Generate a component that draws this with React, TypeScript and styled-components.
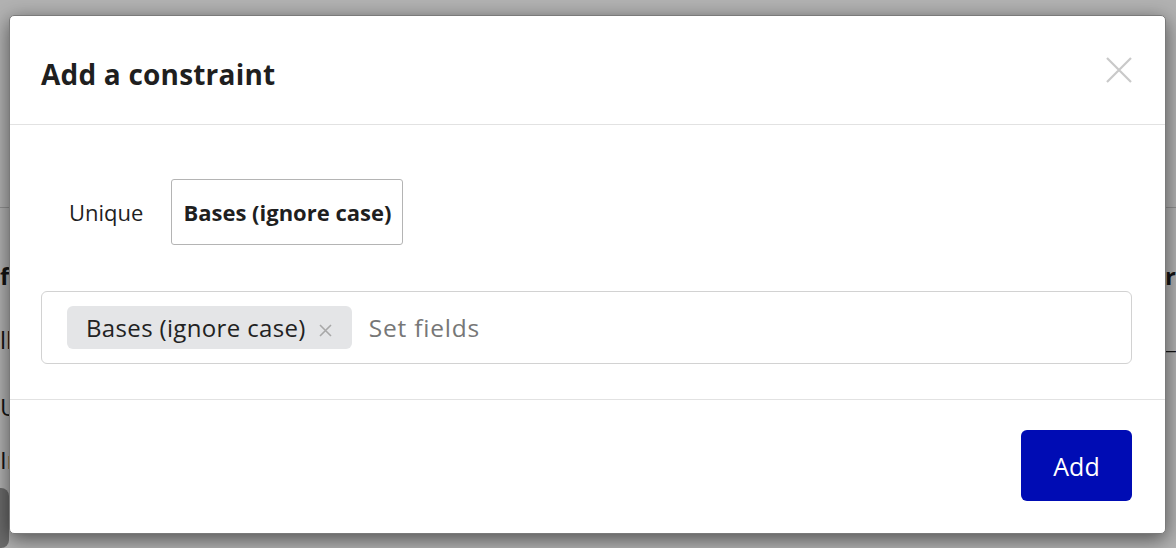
import React from 'react';
import styled, { createGlobalStyle } from 'styled-components';

const GlobalStyle = createGlobalStyle`
  html, body {
    margin: 0;
    padding: 0;
    width: 1176px;
    height: 548px;
    overflow: hidden;
    background: #ffffff;
    font-family: "Open Sans", Lato, Arial, sans-serif;
    color: #1e1e1e;
  }
  * { box-sizing: border-box; }
`;

const Page = styled.div`
  position: relative;
  width: 1176px;
  height: 548px;
  overflow: hidden;
`;

const PageTop = styled.div`
  height: 208px;
  border-bottom: 1px solid #d0d0d0;
`;

const PageRow = styled.div<{ $top: number; $bold?: boolean }>`
  display: flex;
  justify-content: space-between;
  margin-top: ${(p) => p.$top}px;
  font-size: 24px;
  font-weight: ${(p) => (p.$bold ? 700 : 400)};
  line-height: 28px;
  white-space: nowrap;
`;

const PageButton = styled.div`
  margin-top: 14px;
  width: 120px;
  height: 60px;
  margin-left: -111px;
  border-radius: 8px;
  background: #9a9a9a;
`;

const Overlay = styled.div`
  position: absolute;
  inset: 0;
  background: rgba(0, 0, 0, 0.3);
  padding: 15px 10px 0 9px;
`;

const Dialog = styled.div`
  width: 1157px;
  background: #ffffff;
  border: 1px solid #7a7a7a;
  border-radius: 5px;
  box-shadow: 0 5px 20px rgba(0, 0, 0, 0.55);
  display: flex;
  flex-direction: column;
`;

const Header = styled.div`
  height: 109px;
  padding: 0 33px 0 31px;
  display: flex;
  align-items: center;
  justify-content: space-between;
  border-bottom: 1px solid #e2e2e2;
`;

const Title = styled.h2`
  margin: 8px 0 0;
  font-size: 28px;
  font-weight: 700;
  color: #1f1f1f;
  letter-spacing: 0.2px;
`;

const CloseButton = styled.button`
  border: none;
  background: none;
  padding: 0;
  width: 26px;
  height: 26px;
  display: flex;
  align-items: center;
  justify-content: center;
  cursor: pointer;
`;

const Body = styled.div`
  padding: 54px 33px 35px 31px;
  border-bottom: 1px solid #e2e2e2;
  display: flex;
  flex-direction: column;
  gap: 46px;
`;

const RuleRow = styled.div`
  display: flex;
  align-items: center;
  padding-left: 28px;
  gap: 28px;
`;

const RuleLabel = styled.span`
  font-size: 22px;
  color: #1f1f1f;
`;

const FieldBox = styled.div`
  height: 66px;
  padding: 0 11px;
  display: flex;
  align-items: center;
  border: 1px solid #b4b4b4;
  border-radius: 3px;
  font-size: 22px;
  font-weight: 700;
  color: #1f1f1f;
`;

const MultiSelect = styled.div`
  height: 73px;
  border: 1px solid #d2d2d2;
  border-radius: 6px;
  padding: 0 25px;
  display: flex;
  align-items: center;
  gap: 17px;
`;

const Tag = styled.div`
  height: 43px;
  padding: 0 20px 0 19px;
  display: flex;
  align-items: center;
  gap: 13px;
  background: #e4e5e7;
  border-radius: 6px;
  font-size: 24px;
  letter-spacing: 0.35px;
  color: #222222;
`;

const TagRemove = styled.span`
  display: flex;
  align-items: center;
  margin-top: 5px;
`;

const Placeholder = styled.span`
  font-size: 24.5px;
  letter-spacing: 0.8px;
  color: #777777;
`;

const Footer = styled.div`
  padding: 30px 33px 32px;
  display: flex;
  justify-content: flex-end;
`;

const AddButton = styled.button`
  width: 111px;
  height: 71px;
  border: none;
  border-radius: 6px;
  background: #000cb4;
  color: #ffffff;
  font-family: inherit;
  font-size: 25px;
  cursor: pointer;
`;

const CloseIcon = () => (
  <svg width="26" height="26" viewBox="0 0 26 26">
    <path d="M1 1 L25 25 M25 1 L1 25" stroke="#c9c9c9" strokeWidth="2.2" fill="none" />
  </svg>
);

const SmallX = () => (
  <svg width="13" height="13" viewBox="0 0 13 13">
    <path d="M1 1 L12 12 M12 1 L1 12" stroke="#a8a8a8" strokeWidth="1.6" fill="none" />
  </svg>
);

const App: React.FC = () => {
  return (
    <Page>
      <GlobalStyle />
      <PageTop />
      <PageRow $top={54} $bold>
        <span>f</span>
        <span>r</span>
      </PageRow>
      <PageRow $top={36}>
        <span>ll</span>
        <span>ma_</span>
      </PageRow>
      <PageRow $top={39}>
        <span>U</span>
        <span />
      </PageRow>
      <PageRow $top={25}>
        <span>In</span>
        <span />
      </PageRow>
      <PageButton />

      <Overlay>
        <Dialog>
          <Header>
            <Title>Add a constraint</Title>
            <CloseButton aria-label="Close">
              <CloseIcon />
            </CloseButton>
          </Header>
          <Body>
            <RuleRow>
              <RuleLabel>Unique</RuleLabel>
              <FieldBox>Bases (ignore case)</FieldBox>
            </RuleRow>
            <MultiSelect>
              <Tag>
                Bases (ignore case)
                <TagRemove>
                  <SmallX />
                </TagRemove>
              </Tag>
              <Placeholder>Set fields</Placeholder>
            </MultiSelect>
          </Body>
          <Footer>
            <AddButton>Add</AddButton>
          </Footer>
        </Dialog>
      </Overlay>
    </Page>
  );
};

export default App;
